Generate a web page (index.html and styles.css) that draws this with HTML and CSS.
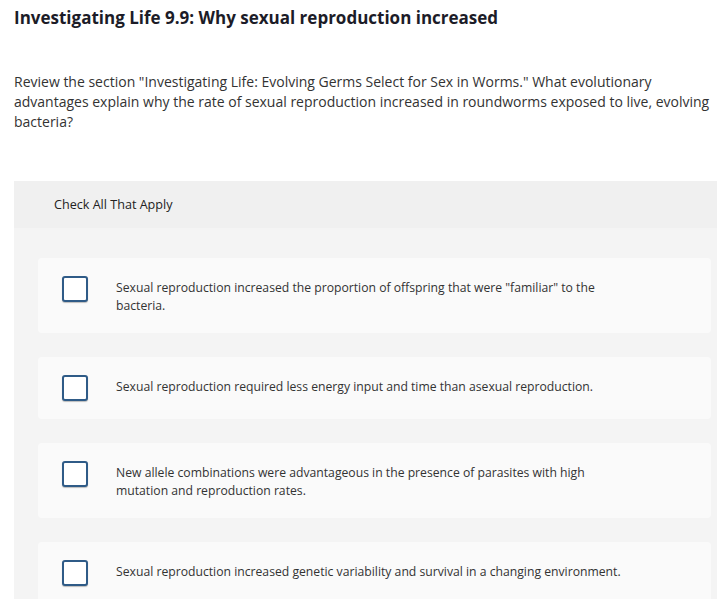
FILE: index.html
```html
<!DOCTYPE html>
<html lang="en">
<head>
  <meta charset="UTF-8" />
  <title>Investigating Life 9.9</title>
  <link rel="stylesheet" href="styles.css">
</head>
<body>
  <h1 class="title">Investigating Life 9.9: Why sexual reproduction increased</h1>

  <p class="prompt">Review the section "Investigating Life: Evolving Germs Select for Sex in Worms." What evolutionary advantages explain why the rate of sexual reproduction increased in roundworms exposed to live, evolving bacteria?</p>

  <div class="question">
    <div class="question-head">Check All That Apply</div>
    <div class="choices">
      <label class="choice">
        <span class="box"></span>
        <span class="choice-text">Sexual reproduction increased the proportion of offspring that were "familiar" to the bacteria.</span>
      </label>
      <label class="choice">
        <span class="box"></span>
        <span class="choice-text">Sexual reproduction required less energy input and time than asexual reproduction.</span>
      </label>
      <label class="choice">
        <span class="box"></span>
        <span class="choice-text">New allele combinations were advantageous in the presence of parasites with high mutation and reproduction rates.</span>
      </label>
      <label class="choice">
        <span class="box"></span>
        <span class="choice-text">Sexual reproduction increased genetic variability and survival in a changing environment.</span>
      </label>
    </div>
  </div>
</body>
</html>
```

FILE: styles.css
```css
html, body {
  overflow: hidden;
}
body {
  margin: 0;
  padding: 0 0 0 14px;
  font-family: "Open Sans", Lato, sans-serif;
  color: #333;
  background: #fff;
}
.title {
  margin: 0;
  padding-top: 8px;
  font-size: 17px;
  line-height: 20px;
  font-weight: 700;
  color: #1c1c28;
}
.prompt {
  margin: 44px 0 0;
  font-size: 14px;
  line-height: 20px;
  max-width: 703px;
}
.question {
  margin-top: 49px;
  width: 721px;
  background: #f4f4f4;
}
.question-head {
  background: #f0f0f0;
  height: 47px;
  padding-left: 40px;
  display: flex;
  align-items: center;
  font-size: 12.6px;
  color: #222;
}
.choices {
  padding: 30px 24px 20px;
  display: flex;
  flex-direction: column;
  gap: 24px;
}
.choice {
  display: flex;
  gap: 28px;
  align-items: flex-start;
  background: #fafafa;
  border-radius: 4px;
  padding: 18px 24px;
}
.box {
  flex: none;
  width: 22px;
  height: 22px;
  border: 2px solid #2f5b87;
  border-radius: 3px;
  background: #fff;
  box-shadow: 0 1px 1px rgba(0, 0, 0, 0.25);
}
.choice-text {
  margin-top: 3px;
  max-width: 515px;
  font-size: 12.2px;
  line-height: 18px;
  color: #333;
}
```
